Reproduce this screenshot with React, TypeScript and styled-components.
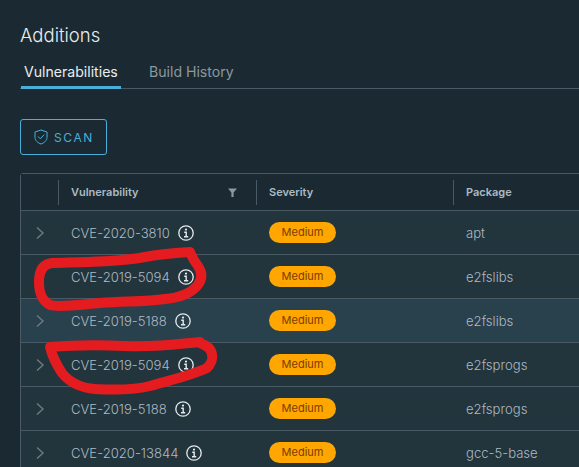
import React, { ReactElement } from 'react';
import styled, { createGlobalStyle } from 'styled-components';

const GlobalStyle = createGlobalStyle`
  html, body {
    margin: 0;
    height: 100%;
    overflow: hidden;
    background: #1b2a32;
    font-family: Inter, "Open Sans", "Liberation Sans", sans-serif;
  }
`;

const Page = styled.div`
  position: relative;
  width: 579px;
  height: 467px;
  overflow: hidden;
  padding: 23px 0 0 20px;
  box-sizing: border-box;
`;

const Title = styled.h2`
  margin: 0;
  font-size: 18.5px;
  line-height: 24px;
  font-weight: 300;
  color: #e9ecef;
`;

const Tabs = styled.div`
  display: flex;
  gap: 25px;
  margin-top: 6px;
  height: 36px;
  box-sizing: border-box;
  border-bottom: 1px solid #495a64;
`;

const Tab = styled.div<{ $active?: boolean }>`
  padding: 10px 4px 0 3px;
  margin-left: ${({ $active }) => ($active ? '1px' : '0')};
  width: ${({ $active }) => ($active ? '93px' : 'auto')};
  height: 23px;
  font-size: 14.1px;
  line-height: 18px;
  font-weight: 400;
  white-space: nowrap;
  color: ${({ $active }) => ($active ? '#eaedf0' : '#8c989f')};
  border-bottom: 3px solid ${({ $active }) => ($active ? '#49afd9' : 'transparent')};
`;

const ScanButton = styled.button`
  display: flex;
  align-items: center;
  gap: 6px;
  width: 87px;
  height: 36px;
  margin-top: 30px;
  padding: 0 0 0 13px;
  box-sizing: border-box;
  background: transparent;
  border: 1px solid #49afd9;
  border-radius: 3px;
  color: #49afd9;
  font-family: inherit;
  font-size: 12px;
  font-weight: 400;
  letter-spacing: 1.6px;
`;

const Table = styled.div`
  width: 640px;
  margin-top: 18px;
  border: 1px solid #495a64;
  border-radius: 3px 0 0 0;
`;

const columns = '37px 198px 197px 1fr';

const HeadRow = styled.div`
  display: grid;
  grid-template-columns: ${columns};
  height: 36px;
  align-items: center;
  background: #1b2a32;
`;

const HeadCell = styled.div`
  display: flex;
  align-items: center;
  justify-content: space-between;
  height: 25px;
  padding: 0 19px 0 12px;
  border-left: 1px solid #495a64;
  font-size: 11px;
  font-weight: 600;
  color: #acbac3;

  &:first-child {
    border-left: none;
  }
`;

const Row = styled.div<{ $selected?: boolean }>`
  display: grid;
  grid-template-columns: ${columns};
  height: 44px;
  box-sizing: border-box;
  align-items: center;
  border-top: 1px solid #495a64;
  background: ${({ $selected }) => ($selected ? '#29404d' : '#22343c')};
`;

const ExpandCell = styled.div`
  display: flex;
  justify-content: center;
  color: #6e7a80;
`;

const Cell = styled.div`
  display: flex;
  align-items: center;
  gap: 8px;
  padding-left: 13px;
  font-size: 13.1px;
  font-weight: 300;
  color: #acbac3;
`;

const Badge = styled.span`
  display: inline-flex;
  align-items: center;
  justify-content: center;
  width: 67px;
  height: 21px;
  margin-top: -1px;
  border-radius: 11px;
  background: #ffa600;
  color: #7a3d00;
  font-size: 11px;
  font-weight: 400;
`;

const Scribble = styled.svg`
  position: absolute;
  left: 0;
  top: 0;
  pointer-events: none;
`;

const ShieldIcon = (): ReactElement => (
  <svg width="14" height="16" viewBox="0 0 14 16" fill="none" stroke="currentColor" strokeWidth="1">
    <path d="M7 1 L13 3 V8.5 C13 11.5 10 14 7 15 C4 14 1 11.5 1 8.5 V3 Z" />
    <path d="M4 7.5 L6.3 9.8 L10.2 5.6" />
  </svg>
);

const InfoIcon = (): ReactElement => (
  <svg width="16" height="16" viewBox="0 0 16 16" fill="none" stroke="#e6eaec">
    <circle cx="8" cy="8" r="7.2" strokeWidth="1.3" />
    <circle cx="8" cy="4.6" r="1.1" fill="#e6eaec" stroke="none" />
    <path d="M6.2 7.2 H8.2 V11.6 M6 11.8 H10.2" strokeWidth="1.4" />
  </svg>
);

const Chevron = (): ReactElement => (
  <svg width="10" height="14" viewBox="0 0 10 14" fill="none" stroke="currentColor" strokeWidth="1.4">
    <path d="M2 1.5 L8 7 L2 12.5" />
  </svg>
);

const FilterIcon = (): ReactElement => (
  <svg width="9" height="9" viewBox="0 0 9 9" fill="#8c989f">
    <path d="M0 0.5 H9 L5.6 4.4 V9 H3.4 V4.4 Z" />
  </svg>
);

const rows = [
  { id: 'CVE-2020-3810', pkg: 'apt' },
  { id: 'CVE-2019-5094', pkg: 'e2fslibs' },
  { id: 'CVE-2019-5188', pkg: 'e2fslibs', selected: true },
  { id: 'CVE-2019-5094', pkg: 'e2fsprogs' },
  { id: 'CVE-2019-5188', pkg: 'e2fsprogs' },
  { id: 'CVE-2020-13844', pkg: 'gcc-5-base' },
];

const App = (): ReactElement => (
  <Page>
    <GlobalStyle />
    <Title>Additions</Title>
    <Tabs>
      <Tab $active>Vulnerabilities</Tab>
      <Tab>Build History</Tab>
    </Tabs>
    <ScanButton>
      <ShieldIcon />
      SCAN
    </ScanButton>
    <Table>
      <HeadRow>
        <HeadCell />
        <HeadCell>
          Vulnerability
          <FilterIcon />
        </HeadCell>
        <HeadCell>Severity</HeadCell>
        <HeadCell>Package</HeadCell>
      </HeadRow>
      {rows.map((row, index) => (
        <Row key={index} $selected={row.selected}>
          <ExpandCell><Chevron /></ExpandCell>
          <Cell>
            {row.id}
            <InfoIcon />
          </Cell>
          <Cell><Badge>Medium</Badge></Cell>
          <Cell>{row.pkg}</Cell>
        </Row>
      ))}
    </Table>
    <Scribble width="579" height="467" fill="none" stroke="#e51c1f" strokeWidth="10" strokeLinecap="round" strokeLinejoin="round">
      <path d="M190 252 C175 253 160 254 145 257 C120 262 85 262 52 263 C42 264 39 272 39 282 C39 292 41 300 50 305 C60 308 85 304 100 303 C125 301 145 302 165 299 C178 298 190 294 197 286 C203 279 202 272 198 266 C194 261 192 257 190 252" />
      <path d="M200 342 C170 345 150 347 125 346 C100 345 75 345 50 347 C52 355 56 364 62 373 C70 383 82 388 95 389 C115 390 135 390 150 386 C170 380 190 376 207 368 C213 362 214 354 209 348 C205 345 203 344 200 343" />
    </Scribble>
  </Page>
);

export default App;
